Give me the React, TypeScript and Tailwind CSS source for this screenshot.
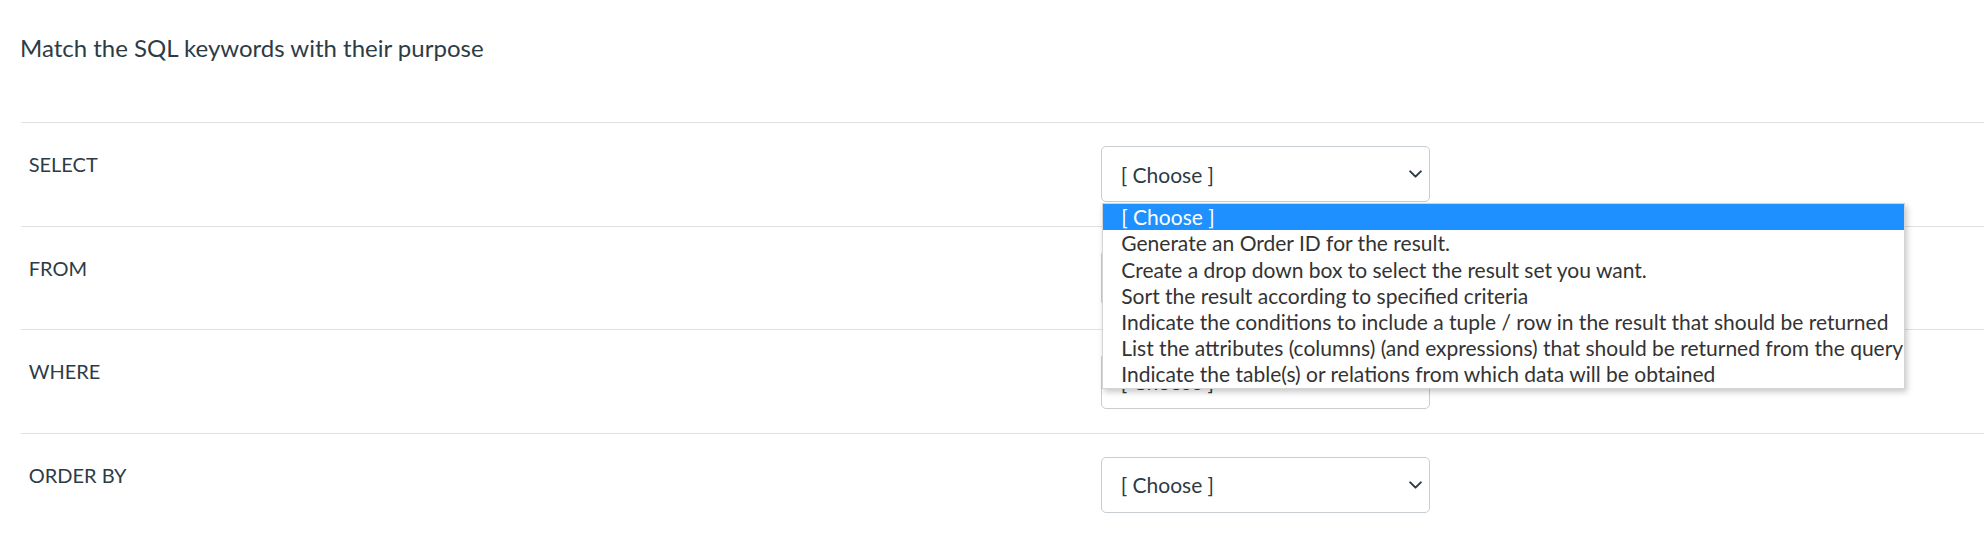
import React from 'react';

const KEYWORDS = ['SELECT', 'FROM', 'WHERE', 'ORDER BY'];

const OPTIONS = [
  '[ Choose ]',
  'Generate an Order ID for the result.',
  'Create a drop down box to select the result set you want.',
  'Sort the result according to specified criteria',
  'Indicate the conditions to include a tuple / row in the result that should be returned',
  'List the attributes (columns) (and expressions) that should be returned from the query',
  'Indicate the table(s) or relations from which data will be obtained',
];

function Chevron() {
  return (
    <svg className="w-[13px] h-[8px]" viewBox="0 0 13 8" fill="none" stroke="#2d3b45" strokeWidth={2} strokeLinecap="round" strokeLinejoin="round">
      <path d="M1.2 1.4l5.3 5.2 5.3-5.2" />
    </svg>
  );
}

// native select popup, opened on the first row
function OptionList() {
  return (
    <div className="absolute left-[1.6px] top-[57px] w-[803px] bg-white border border-[#d4d4d4] shadow-[2px_3px_6px_rgba(0,0,0,0.22)] z-10">
      {OPTIONS.map((opt, i) => (
        <div
          key={opt}
          className={`h-[26.2px] leading-[26.2px] pl-[18px] text-[21px] whitespace-nowrap ${i === 0 ? 'bg-[#1e90ff] text-white' : 'text-[#333333]'}`}
        >
          {opt}
        </div>
      ))}
    </div>
  );
}

function ChooseBox({ open }: { open?: boolean }) {
  return (
    <div className="relative w-[329px]">
      <div className="h-[56px] rounded-[5px] border border-[#c7cdd1] bg-white flex items-center justify-between pl-[19px] pr-[7px]">
        <span className="text-[21px] leading-[1.2] text-[#2d3b45]">[ Choose ]</span>
        <Chevron />
      </div>
      {open && <OptionList />}
    </div>
  );
}

export default function App() {
  return (
    <div className="w-[1984px] h-[544px] overflow-hidden bg-white font-['Lato','Open_Sans',sans-serif] text-[#2d3b45]">
      <div className="pl-[20px] pt-[34px] h-[122.3px]">
        <p className="text-[24px] leading-[1.2]">Match the SQL keywords with their purpose</p>
      </div>
      <div className="ml-[20.7px]">
        {KEYWORDS.map((kw, i) => (
          <div key={kw} className="h-[103.6px] border-t border-[#dfe2e5] grid grid-cols-[1080px_1fr]">
            <div className="pl-[8px] pt-[29px] text-[20px] leading-[1.2]">{kw}</div>
            <div className="pt-[23px]">
              <ChooseBox open={i === 0} />
            </div>
          </div>
        ))}
      </div>
    </div>
  );
}
